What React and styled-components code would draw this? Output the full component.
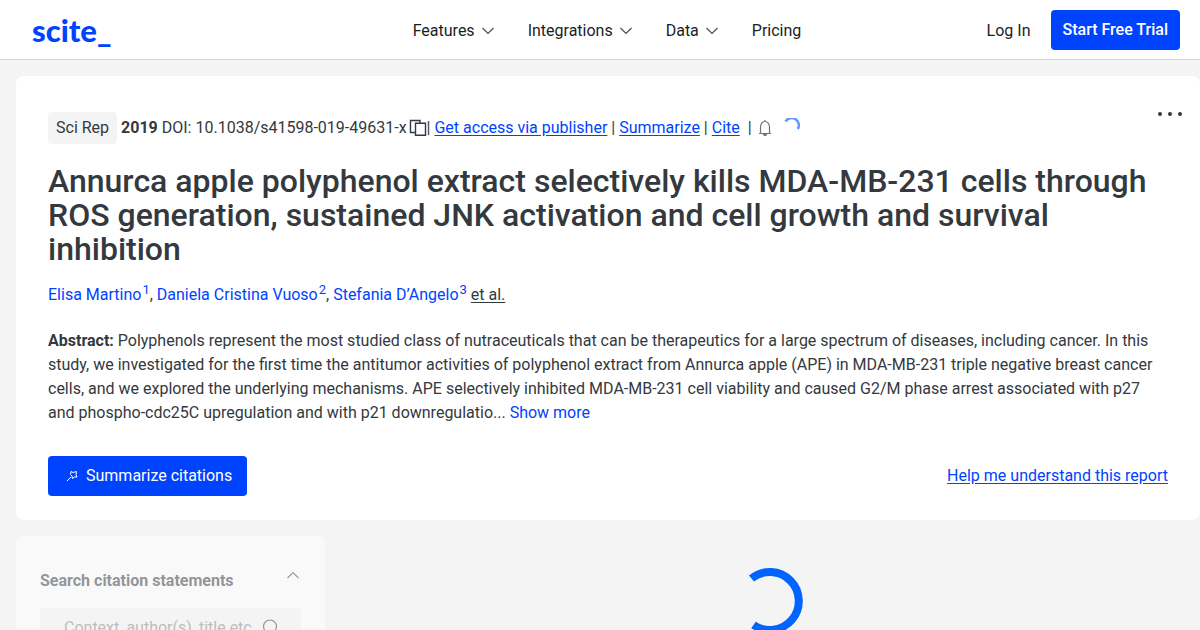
import styled, { createGlobalStyle } from 'styled-components';

const GlobalStyle = createGlobalStyle`
    * {
        box-sizing: border-box;
    }

    body {
        margin: 0;
        background: #f4f4f4;
        color: #33393e;
        font-family: Roboto, 'Liberation Sans', sans-serif;
        font-size: 16px;
        line-height: 24px;
    }

    p, h1, h2 {
        margin: 0;
    }

    button {
        border: 0;
        padding: 0;
        background: none;
        color: inherit;
        font: inherit;
        cursor: pointer;
    }
`;

const menu = [
    { name: 'Features', open: true },
    { name: 'Integrations', open: true },
    { name: 'Data', open: true },
    { name: 'Pricing', open: false },
];

const authors = ['Elisa Martino', 'Daniela Cristina Vuoso', 'Stefania D’Angelo'];

const Chevron = ({ up }) => (
    <svg width="14" height="8" viewBox="0 0 14 8" fill="none" stroke="#4a4e52" strokeWidth="1.2">
        <path d={up ? 'M1.500 7L7 1.500 12.500 7' : 'M1.500 1L7 6.500 12.500 1'} />
    </svg>
);

const CopyIcon = () => (
    <svg width="18" height="18" viewBox="0 0 18 18" fill="none" stroke="currentColor" strokeWidth="1.4">
        <path d="M6.500 13.500H1.500V1.500h9.500V4" />
        <path d="M6.500 4.200h10v12h-10z" />
    </svg>
);

const BellIcon = () => (
    <svg width="14" height="18" viewBox="0 0 14 18" fill="none" stroke="#6f7478" strokeWidth="1.2">
        <path d="M1 14.500h12M2.500 14.500V8a4.500 5.500 0 0 1 9 0v6.500M7 2.500V1" />
        <path d="M5.500 15a1.500 1.500 0 0 0 3 0" fill="#6f7478" />
    </svg>
);

const WandIcon = () => (
    <svg width="12" height="12" viewBox="0 0 12 12" fill="none" stroke="currentColor" strokeWidth="1">
        <path d="M1 11l4-4" />
        <path d="M5 1.500l2 1 3.500-1-.5 3.200 1 2.300-2.500 0-2 1.500-.5-2.500-1.500-1.500z" />
    </svg>
);

const Article = () => (
    <Card>
        <MetaRow>
            <Meta>
                <Journal>Sci Rep</Journal>
                <span><strong>2019</strong> DOI: 10.1038/s41598-019-49631-x</span>
                <CopyButton aria-label="Copy DOI"><CopyIcon /></CopyButton>
                <span>
                    | <TextLink href="#publisher">Get access via publisher</TextLink> |{' '}
                    <TextLink href="#summarize">Summarize</TextLink> | <TextLink href="#cite">Cite</TextLink>
                </span>
                <Bar>|</Bar>
                <AlertButton aria-label="Create alert"><BellIcon /></AlertButton>
                <SmallSpinner width="16" height="16" viewBox="0 0 16 16" fill="none">
                    <path d="M1.500 3.500A7 7 0 0 1 13.800 11" stroke="#5c9bff" strokeWidth="2.5" />
                </SmallSpinner>
            </Meta>
            <MoreButton aria-label="More options">
                <svg width="26" height="4" viewBox="0 0 26 4" fill="currentColor">
                    <circle cx="3" cy="2" r="2" />
                    <circle cx="13" cy="2" r="2" />
                    <circle cx="23" cy="2" r="2" />
                </svg>
            </MoreButton>
        </MetaRow>
        <Title>
            Annurca apple polyphenol extract selectively kills MDA-MB-231 cells through ROS generation,
            sustained JNK activation and cell growth and survival inhibition
        </Title>
        <Authors>
            {authors.map((name, i) => (
                <span key={name}>
                    <PlainLink href="#author">{name}<sup>{i + 1}</sup></PlainLink>
                    {i < authors.length - 1 ? ', ' : ' '}
                </span>
            ))}
            <EtAl>et al.</EtAl>
        </Authors>
        <p>
            <strong>Abstract:</strong> Polyphenols represent the most studied class of nutraceuticals that can be
            therapeutics for a large spectrum of diseases, including cancer. In this study, we investigated for the
            first time the antitumor activities of polyphenol extract from Annurca apple (APE) in MDA-MB-231 triple
            negative breast cancer cells, and we explored the underlying mechanisms. APE selectively inhibited
            MDA-MB-231 cell viability and caused G2/M phase arrest associated with p27 and phospho-cdc25C
            upregulation and with p21 downregulatio... <ShowMore>Show more</ShowMore>
        </p>
        <Actions>
            <SummarizeButton><WandIcon />Summarize citations</SummarizeButton>
            <TextLink href="#help">Help me understand this report</TextLink>
        </Actions>
    </Card>
);

const SearchPanel = () => (
    <Panel>
        <PanelHead>
            <h2>Search citation statements</h2>
            <CollapseButton aria-label="Collapse"><Chevron up /></CollapseButton>
        </PanelHead>
        <SearchBox>
            <input type="text" aria-label="Search citation statements" placeholder="Context, author(s), title etc." />
            <svg width="18" height="18" viewBox="0 0 18 18" fill="none" stroke="#33393e" strokeWidth="1.2">
                <circle cx="8" cy="7.500" r="6.500" />
                <path d="M12.500 12l5 5" />
            </svg>
        </SearchBox>
    </Panel>
);

const App = () => (
    <>
        <GlobalStyle />
        <Header>
            <Logo href="#home">scite_</Logo>
            <Nav>
                {menu.map((item) =>
                    item.open ? (
                        <button key={item.name}>{item.name}<Chevron /></button>
                    ) : (
                        <a key={item.name} href="#pricing">{item.name}</a>
                    )
                )}
            </Nav>
            <Account>
                <LoginLink href="#login">Log In</LoginLink>
                <TrialLink href="#trial">Start Free Trial</TrialLink>
            </Account>
        </Header>
        <Page>
            <Article />
            <Columns>
                <SearchPanel />
                <Results>
                    <svg width="66" height="66" viewBox="0 0 66 66" fill="none">
                        <path d="M14.500 10.500A29 29 0 1 1 16.500 57" stroke="#0064ff" strokeWidth="8" />
                    </svg>
                </Results>
            </Columns>
        </Page>
    </>
);

const Header = styled.header`
    display: grid;
    grid-template-columns: 1fr auto 1fr;
    align-items: center;
    height: 60px;
    padding: 0 20px 0 32px;
    background: #fff;
    border-bottom: 1px solid #d8d8d8;
    color: #1d1d1f;
`;

const Logo = styled.a`
    justify-self: start;
    color: #0043ff;
    font-family: Lato, sans-serif;
    font-size: 31px;
    font-weight: 900;
    text-decoration: none;
`;

const Nav = styled.nav`
    display: flex;
    align-items: center;
    gap: 33px;
    padding: 2px 0 0 2px;

    button {
        display: flex;
        align-items: center;
        gap: 6px;
    }

    a {
        color: inherit;
        text-decoration: none;
    }
`;

const Account = styled.div`
    display: flex;
    align-items: center;
    justify-content: flex-end;
    gap: 20px;
`;

const LoginLink = styled.a`
    padding-top: 2px;
    color: inherit;
    text-decoration: none;
`;

const TrialLink = styled.a`
    padding: 8px 12px;
    border-radius: 4px;
    background: #0043ff;
    color: #fff;
    font-weight: 500;
    text-decoration: none;
`;

const Page = styled.main`
    padding: 16px 0 0 16px;
`;

const Card = styled.article`
    padding: 36px 32px 24px;
    border-radius: 8px;
    background: #fff;
`;

const MetaRow = styled.div`
    display: flex;
    align-items: flex-start;
    justify-content: space-between;
`;

const Meta = styled.div`
    display: flex;
    align-items: center;
`;

const Journal = styled.span`
    margin-right: 4px;
    padding: 4px 8px;
    border-radius: 4px;
    background: #f4f4f4;
`;

const CopyButton = styled.button`
    display: flex;
    margin-left: 2px;
`;

const Bar = styled.span`
    margin: 0 6px 0 8px;
`;

const AlertButton = styled.button`
    display: flex;
`;

const SmallSpinner = styled.svg`
    align-self: flex-start;
    margin: 6px 0 0 12px;
`;

const MoreButton = styled.button`
    display: flex;
    margin-right: -15px;
`;

const TextLink = styled.a`
    color: #0043ff;
    text-underline-offset: 2px;
`;

const PlainLink = styled.a`
    color: #0043ff;
    text-decoration: none;
`;

const Title = styled.h1`
    margin: 20px 0 17px;
    font-size: 32px;
    font-weight: 500;
    line-height: 34px;
`;

const Authors = styled.p`
    margin-bottom: 22px;

    sup {
        margin-left: 1px;
        font-size: 13px;
        line-height: 0;
    }
`;

const EtAl = styled.button`
    text-decoration: underline;
    text-underline-offset: 2px;
`;

const ShowMore = styled.button`
    color: #0043ff;
`;

const Actions = styled.div`
    display: flex;
    align-items: center;
    justify-content: space-between;
    margin-top: 31px;
`;

const SummarizeButton = styled.button`
    display: flex;
    align-items: center;
    gap: 8px;
    height: 40px;
    padding: 0 15px 0 18px;
    border-radius: 4px;
    background: #0043ff;
    color: #fff;
`;

const Columns = styled.div`
    display: grid;
    grid-template-columns: 309px 1fr;
    align-items: start;
    margin-top: 16px;
`;

const Panel = styled.aside`
    padding: 33px 24px;
    border-radius: 8px;
    background: #fff;
    opacity: 0.5;
`;

const PanelHead = styled.div`
    display: flex;
    align-items: flex-start;
    justify-content: space-between;

    h2 {
        font-size: 16px;
        font-weight: 700;
        line-height: 24px;
    }
`;

const CollapseButton = styled.button`
    display: flex;
    padding: 2px 1px;
`;

const SearchBox = styled.label`
    display: flex;
    align-items: center;
    height: 40px;
    margin-top: 15px;
    padding: 0 21px 0 24px;
    border-radius: 4px;
    background: #f4f4f4;

    input {
        flex: 1;
        min-width: 0;
        border: 0;
        padding: 0;
        background: none;
        font: inherit;
        outline: 0;
    }

    input::placeholder {
        color: #85888f;
    }
`;

const Results = styled.section`
    display: flex;
    justify-content: center;
    padding: 32px 0 0 14px;
`;

export default App;
